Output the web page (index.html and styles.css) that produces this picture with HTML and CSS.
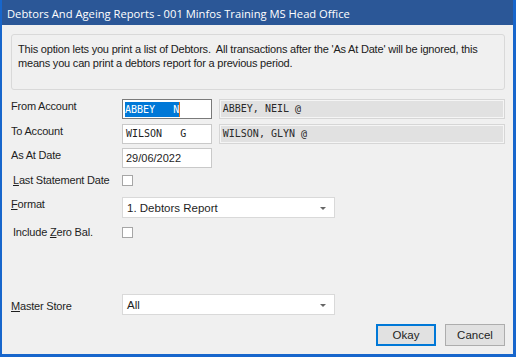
FILE: index.html
```html
<!DOCTYPE html>
<html lang="en">
<head>
  <meta charset="UTF-8">
  <title>Debtors And Ageing Reports</title>
  <link rel="stylesheet" href="styles.css">
</head>
<body>
  <div class="window">
    <div class="titlebar">Debtors And Ageing Reports - 001 Minfos Training MS Head Office</div>
    <div class="content">
      <div class="info">
        This option lets you print a list of Debtors.&nbsp; All transactions after the 'As At Date' will be ignored, this means you can print a debtors report for a previous period.
      </div>

      <div class="row row-from">
        <label class="label">From Account</label>
        <div class="field code focused"><span class="sel">ABBEY&nbsp;&nbsp;&nbsp;N</span><span class="caret"></span></div>
        <div class="namebox">ABBEY, NEIL @</div>
      </div>
      <div class="row row-to">
        <label class="label">To Account</label>
        <div class="field code">WILSON&nbsp;&nbsp;&nbsp;G</div>
        <div class="namebox">WILSON, GLYN @</div>
      </div>
      <div class="row row-date">
        <label class="label">As At Date</label>
        <div class="field">29/06/2022</div>
      </div>
      <div class="row row-check row-last">
        <label class="label indent"><u>L</u>ast Statement Date</label>
        <span class="checkbox"></span>
      </div>
      <div class="row row-format">
        <label class="label"><u>F</u>ormat</label>
        <div class="combo"><span>1. Debtors Report</span><span class="arrow"></span></div>
      </div>
      <div class="row row-check row-zero">
        <label class="label indent">Include <u>Z</u>ero Bal.</label>
        <span class="checkbox"></span>
      </div>
      <div class="row row-store">
        <label class="label label-low"><u>M</u>aster Store</label>
        <div class="combo"><span>All</span><span class="arrow"></span></div>
      </div>

      <div class="buttons">
        <button class="btn btn-default">Okay</button>
        <button class="btn">Cancel</button>
      </div>
    </div>
  </div>
</body>
</html>
```

FILE: styles.css
```css
body {
  margin: 0;
  padding: 0;
  font-family: "Liberation Sans", Arial, sans-serif;
  font-size: 11px;
  color: #1e1e1e;
  background: #f0f0f0;
}
.window {
  width: 511px;
  height: 354px;
  border-left: 2px solid #1766cc;
  border-right: 3px solid #1766cc;
  border-bottom: 3px solid #1766cc;
  background: #f0f0f0;
  display: flex;
  flex-direction: column;
}
.titlebar {
  height: 25px;
  line-height: 27px;
  padding-left: 5px;
  background: #2b5797;
  color: #fff;
  font-family: "Open Sans", "Noto Sans", sans-serif;
  font-size: 11.2px;
  white-space: nowrap;
}
.content {
  padding: 9px 8px 0 9px;
  display: flex;
  flex-direction: column;
}
.info {
  height: 56px;
  box-sizing: border-box;
  border: 1px solid #d9d9d9;
  border-radius: 3px;
  padding: 8px 2px 0 6px;
  line-height: 13.5px;
  letter-spacing: -0.2px;
  color: #202020;
}
.row {
  display: flex;
  align-items: flex-start;
}
.label {
  width: 111px;
  flex: none;
  line-height: 14px;
  letter-spacing: -0.2px;
  white-space: nowrap;
}
.label.indent {
  width: 109px;
  padding-left: 2px;
}
.row-from { margin-top: 9px; }
.row-to { margin-top: 5px; }
.row-date { margin-top: 4px; }
.row-last { margin-top: 4px; }
.row-format { margin-top: 9px; }
.row-zero { margin-top: 6px; }
.row-store { margin-top: 54px; }
.label-low {
  padding-top: 5px;
}
.row-check {
  height: 16px;
  align-items: center;
}
.field {
  width: 90px;
  height: 20px;
  box-sizing: border-box;
  border: 1px solid #c9c9c9;
  background: #fff;
  padding: 0 0 0 3px;
  line-height: 18px;
  font-size: 11px;
  white-space: nowrap;
  display: flex;
  align-items: center;
}
.field.code {
  font-family: "DejaVu Sans Mono", "Liberation Mono", monospace;
  font-size: 10px;
}
.field.focused {
  border-color: #7a7a7a;
  padding-left: 2px;
}
.sel {
  background: #0078d7;
  color: #fff;
  line-height: 15px;
}
.caret {
  display: inline-block;
  width: 1px;
  height: 15px;
  background: #e8731a;
}
.namebox {
  width: 287px;
  height: 20px;
  margin-left: 7px;
  box-sizing: border-box;
  border: 1px solid #d6d6d6;
  box-shadow: inset 0 0 0 1px #f5f5f5;
  background: #e1e1e1;
  padding-left: 3px;
  line-height: 18px;
  font-family: "DejaVu Sans Mono", "Liberation Mono", monospace;
  font-size: 10px;
  color: #2a2a2a;
  white-space: nowrap;
}
.checkbox {
  width: 11px;
  height: 11px;
  box-sizing: border-box;
  border: 1px solid #a6a6a6;
  background: #fff;
}
.combo {
  width: 213px;
  height: 21px;
  box-sizing: border-box;
  border: 1px solid #d9d9d9;
  background: #fff;
  display: flex;
  align-items: center;
  justify-content: space-between;
  padding: 0 8px 0 4px;
  font-size: 11.5px;
}
.arrow {
  width: 0;
  height: 0;
  border-left: 3px solid transparent;
  border-right: 3px solid transparent;
  border-top: 3px solid #666;
  margin-top: 1px;
}
.buttons {
  display: flex;
  justify-content: flex-end;
  gap: 9px;
  margin-top: 9px;
}
.btn {
  width: 60px;
  height: 22px;
  box-sizing: border-box;
  border: 1px solid #adadad;
  background: #e1e1e1;
  font-family: "Liberation Sans", Arial, sans-serif;
  font-size: 11.5px;
  color: #1e1e1e;
  padding: 0;
}
.btn-default {
  border: 1px solid #0078d7;
  box-shadow: inset 0 0 0 1px #0078d7;
}
```
